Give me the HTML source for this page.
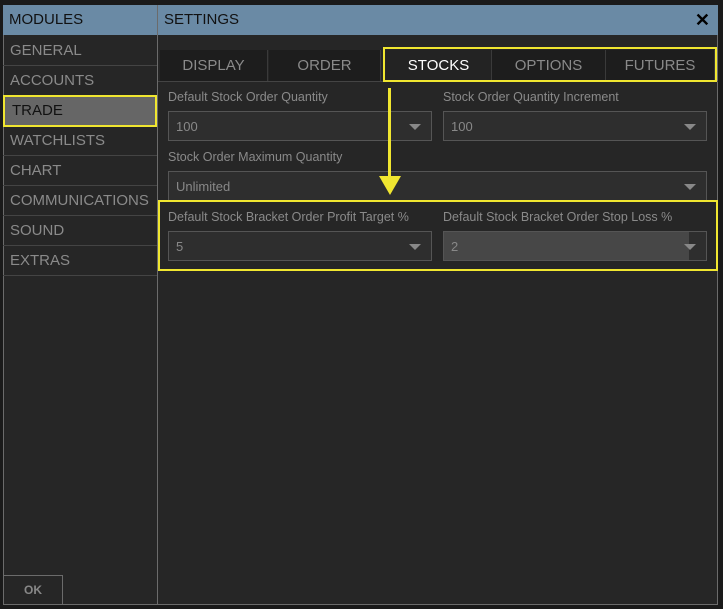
<!DOCTYPE html><html><head><style>
body{margin:0;width:723px;height:609px;background:#1a1a1a;font-family:"Liberation Sans",sans-serif;position:relative;overflow:hidden}
.a{position:absolute;box-sizing:border-box}
.hd{background:#6a8aa5;color:#111;font-size:15px;line-height:30px;padding-left:6px}
.it{left:3px;width:154px;height:30px;border-bottom:1px solid #444;color:#8a8a8a;font-size:15px;line-height:29px;padding-left:7px}
.tab{top:50px;height:31px;background:#1d1d1d;color:#8a8a8a;font-size:15px;line-height:31px;text-align:center;border-right:1px solid #3a3a3a}
.lb{color:#8a8a8a;font-size:12.5px}
.sel{height:30px;border:1px solid #555;background:#2e2e2e;color:#888;font-size:13px;line-height:29px;padding-left:7px}
.sel:after{content:"";position:absolute;right:10px;top:12px;border-left:6px solid transparent;border-right:6px solid transparent;border-top:6px solid #888}
</style></head><body>
<div class="a" style="left:3px;top:5px;width:715px;height:600px;background:#262626;border:1px solid #6b6b6b"></div>
<div class="a hd" style="left:3px;top:5px;width:155px;height:30px">MODULES</div>
<div class="a hd" style="left:158px;top:5px;width:560px;height:30px">SETTINGS<span style="position:absolute;right:8px;font-weight:bold;font-size:18px;color:#000">✕</span></div>
<div class="a" style="left:157px;top:5px;width:1px;height:600px;background:#6b6b6b"></div>
<div class="a it" style="top:36px">GENERAL</div>
<div class="a it" style="top:66px">ACCOUNTS</div>
<div class="a it" style="top:95px;height:32px;background:#666;color:#111;border:2px solid #f0e630;line-height:28px">TRADE</div>
<div class="a it" style="top:126px">WATCHLISTS</div>
<div class="a it" style="top:156px">CHART</div>
<div class="a it" style="top:186px">COMMUNICATIONS</div>
<div class="a it" style="top:216px">SOUND</div>
<div class="a it" style="top:246px">EXTRAS</div>
<div class="a" style="left:3px;top:575px;width:60px;height:30px;border:1px solid #6b6b6b;color:#888;font-weight:bold;font-size:12px;text-align:center;line-height:29px">OK</div>
<div class="a" style="left:158px;top:81px;width:560px;height:1px;background:#444"></div>
<div class="a tab" style="left:160px;width:108px">DISPLAY</div>
<div class="a tab" style="left:269px;width:112px">ORDER</div>
<div class="a tab" style="left:386px;width:106px;color:#fff;background:#232323">STOCKS</div>
<div class="a tab" style="left:492px;width:114px">OPTIONS</div>
<div class="a tab" style="left:606px;width:109px">FUTURES</div>
<div class="a" style="left:383px;top:47px;width:334px;height:35px;border:2px solid #f0e630"></div>
<div class="a lb" style="left:168px;top:90px">Default Stock Order Quantity</div>
<div class="a lb" style="left:443px;top:90px">Stock Order Quantity Increment</div>
<div class="a sel" style="left:168px;top:111px;width:264px">100</div>
<div class="a sel" style="left:443px;top:111px;width:264px">100</div>
<div class="a lb" style="left:168px;top:150px">Stock Order Maximum Quantity</div>
<div class="a sel" style="left:168px;top:171px;width:539px">Unlimited</div>
<div class="a" style="left:158px;top:200px;width:560px;height:71px;border:2px solid #f0e630"></div>
<div class="a lb" style="left:168px;top:210px">Default Stock Bracket Order Profit Target %</div>
<div class="a lb" style="left:443px;top:210px">Default Stock Bracket Order Stop Loss %</div>
<div class="a sel" style="left:168px;top:231px;width:264px">5</div>
<div class="a sel" style="left:443px;top:231px;width:264px;background:linear-gradient(90deg,#474747 0 245px,#2e2e2e 245px)">2</div>
<div class="a" style="left:388px;top:88px;width:3px;height:92px;background:#f0e630"></div>
<div class="a" style="left:379px;top:176px;border-left:11px solid transparent;border-right:11px solid transparent;border-top:19px solid #f0e630"></div>
</body></html>
